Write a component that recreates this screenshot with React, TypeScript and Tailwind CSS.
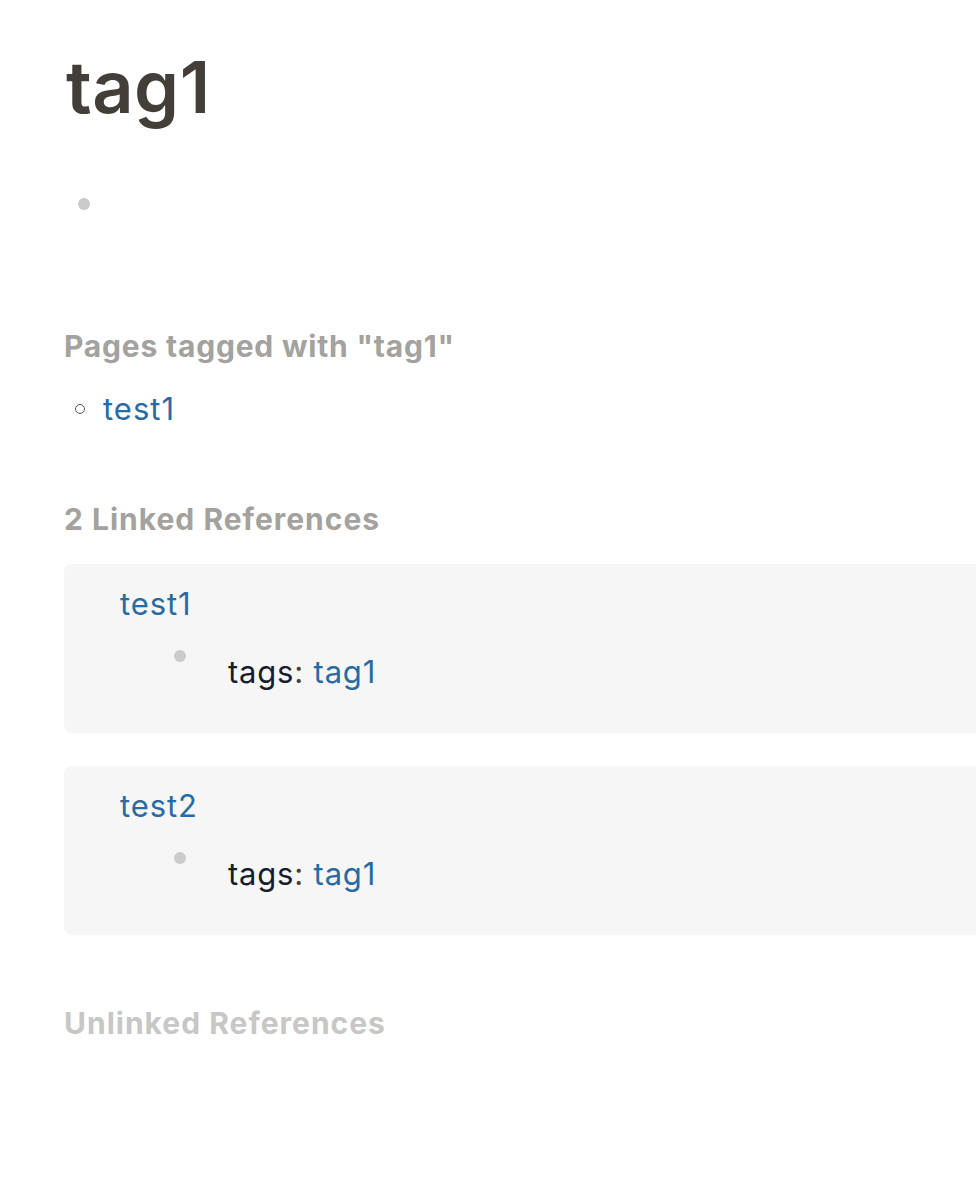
import React from 'react'

// Tag page: title, empty block, tagged pages and reference cards
function Bullet() {
  return <span className="block w-[12px] h-[12px] rounded-full bg-[#cbcbcb]" />
}

function RefCard({ page, className = '' }: { page: string; className?: string }) {
  return (
    <div className={`bg-[#f6f6f6] rounded-l-lg pl-[56px] pt-[22px] pb-[43px] ${className}`}>
      <div className="text-[31px] leading-[36px] tracking-[0.9px] text-[#2a6aa3]">{page}</div>
      <div className="flex items-start mt-[22px]">
        <div className="ml-[54px] mt-[6px]">
          <Bullet />
        </div>
        <div className="ml-[42px] mt-[10px] text-[31px] leading-[36px] tracking-[0.8px] text-[#161d2e]">
          tags<span className="text-[#433f38]">:</span> <span className="text-[#2a6aa3]">tag1</span>
        </div>
      </div>
    </div>
  )
}

export default function App() {
  return (
    <div
      className="min-h-screen bg-white pl-16 overflow-hidden"
      style={{ fontFamily: 'Inter, "Noto Sans", sans-serif' }}
    >
      <h1 className="pt-[43px] text-[72px] leading-[87px] font-semibold tracking-[0.5px] text-[#433f38] pl-[2px]">tag1</h1>

      <div className="h-[30px] mt-[59px] flex items-center pl-[14px]">
        <Bullet />
      </div>

      <h2 className="mt-[110px] text-[30px] leading-[34px] font-bold tracking-[0.8px] text-[#a3a29e]">Pages tagged with "tag1"</h2>
      <ul className="mt-[28px]">
        <li className="flex items-center text-[31px] leading-[36px]">
          <span className="ml-[11px] w-[10px] h-[10px] rounded-full border border-[#555]" />
          <span className="ml-[18px] tracking-[1px] text-[#2a6aa3]">test1</span>
        </li>
      </ul>

      <h2 className="mt-[74px] text-[30px] leading-[36px] font-bold tracking-[1px] text-[#a3a29e]">2 Linked References</h2>
      <RefCard page="test1" className="mt-[27px]" />
      <RefCard page="test2" className="mt-[33px]" />

      <h2 className="mt-[70px] text-[30px] leading-[36px] font-bold tracking-[1px] text-[#c7c7c5]">Unlinked References</h2>
    </div>
  )
}
